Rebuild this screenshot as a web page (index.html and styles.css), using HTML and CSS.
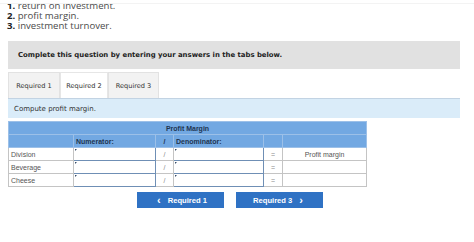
FILE: index.html
```html
<!DOCTYPE html>
<html lang="en">
<head>
  <meta charset="UTF-8" />
  <title>Profit Margin</title>
  <link rel="stylesheet" href="styles.css">
</head>
<body>
  <div class="topbar"></div>
  <ol class="parts">
    <li><b>1.</b> return on investment.</li>
    <li><b>2.</b> profit margin.</li>
    <li><b>3.</b> investment turnover.</li>
  </ol>

  <div class="notice">Complete this question by entering your answers in the tabs below.</div>

  <div class="tabs">
    <div class="tab">Required 1</div>
    <div class="tab active">Required 2</div>
    <div class="tab">Required 3</div>
  </div>
  <div class="prompt">Compute profit margin.</div>

  <table class="grid">
    <colgroup>
      <col class="w-label">
      <col class="w-num">
      <col class="w-op">
      <col class="w-den">
      <col class="w-eq">
      <col class="w-res">
    </colgroup>
    <tr class="head">
      <th colspan="6">Profit Margin</th>
    </tr>
    <tr class="head sub">
      <th></th>
      <th>Numerator:</th>
      <th class="c-op">/</th>
      <th>Denominator:</th>
      <th></th>
      <th></th>
    </tr>
    <tr>
      <td>Division</td>
      <td class="inp"><span class="box"></span></td>
      <td class="c-op">/</td>
      <td class="inp"><span class="box"></span></td>
      <td class="c-op">=</td>
      <td class="c-res">Profit margin</td>
    </tr>
    <tr>
      <td>Beverage</td>
      <td class="inp"><span class="box"></span></td>
      <td class="c-op">/</td>
      <td class="inp"><span class="box"></span></td>
      <td class="c-op">=</td>
      <td class="c-res"></td>
    </tr>
    <tr>
      <td>Cheese</td>
      <td class="inp"><span class="box"></span></td>
      <td class="c-op">/</td>
      <td class="inp"><span class="box"></span></td>
      <td class="c-op">=</td>
      <td class="c-res"></td>
    </tr>
  </table>

  <div class="nav">
    <button class="btn"><span class="chev">&lsaquo;</span> Required 1</button>
    <button class="btn">Required 3 <span class="chev">&rsaquo;</span></button>
  </div>
</body>
</html>
```

FILE: styles.css
```css
* { margin: 0; padding: 0; box-sizing: border-box; }
body {
  font-family: 'Open Sans', 'Liberation Sans', sans-serif;
  background: #fff;
  color: #333;
  padding: 0 8px;
  width: 474px;
  overflow: hidden;
}
/* sticky header of the page, scrolled over the first list line */
.topbar {
  position: absolute;
  left: 0;
  top: 0;
  width: 474px;
  height: 4px;
  background: rgba(255, 255, 255, 0.96);
  border-bottom: 1px solid #f3f3f3;
  z-index: 2;
}
.parts {
  list-style: none;
  font-size: 9.6px;
  line-height: 10px;
  color: #4a4a4a;
  margin: 1px 0 0 -1px;
}
.parts li { height: 10px; }
.parts b { color: #222; }
.notice {
  margin-top: 10px;
  width: 452px;
  height: 28px;
  background: #e1e1e1;
  font-family: 'DejaVu Sans', Verdana, sans-serif;
  font-weight: bold;
  font-size: 6.9px;
  color: #222;
  padding-left: 10px;
  display: flex;
  align-items: center;
}
.tabs {
  display: flex;
  margin-top: 3px;
  height: 26px;
}
.tab {
  font-family: 'DejaVu Sans', Verdana, sans-serif;
  font-size: 6.6px;
  color: #333;
  background: #f2f2f2;
  border: 1px solid #e2e2e2;
  border-bottom: none;
  display: flex;
  align-items: center;
  justify-content: center;
  width: 52px;
}
.tab:nth-child(2) { width: 48px; }
.tab:nth-child(3) { width: 51px; }
.tab.active { background: #fff; border-color: #e6e6e6; }
.prompt {
  width: 452px;
  height: 20px;
  background: #daecf9;
  border-top: 1px solid #c2d3e3;
  font-family: 'DejaVu Sans', Verdana, sans-serif;
  font-size: 7px;
  color: #333;
  padding-left: 6px;
  display: flex;
  align-items: center;
}
.grid {
  margin-top: 3px;
  border-collapse: collapse;
  width: 358px;
  font-family: 'Liberation Sans', Arial, sans-serif;
  font-size: 7px;
  table-layout: fixed;
}
.w-label { width: 65px; }
.w-num { width: 82px; }
.w-op { width: 18px; }
.w-den { width: 90px; }
.w-eq { width: 19px; }
.w-res { width: 84px; }
.grid th, .grid td {
  border: 1px solid #c4c4c4;
  height: 13px;
  padding: 0 2px;
  white-space: nowrap;
  overflow: hidden;
}
.grid .head th {
  background: #72a8e2;
  color: #1f3550;
  font-weight: bold;
  border-color: #9cc0e8;
  height: 13px;
}
.grid .sub th { text-align: left; padding-left: 2px; }
.grid .sub th.c-op { text-align: center; padding: 0; }
.grid td { color: #555; }
.grid .c-op { text-align: center; padding: 0; }
.grid td.c-op { color: #888; }
.grid .c-res { text-align: center; }
.grid td.inp {
  padding: 0;
  border: 1px solid #6f8fb5;
  position: relative;
}
.box {
  display: block;
  width: 100%;
  height: 100%;
  min-height: 12px;
  background: #fff;
}
.box::before {
  content: "";
  position: absolute;
  left: 1px;
  top: 1px;
  border-left: 2px solid #3a4f6a;
  border-bottom: 2px solid transparent;
}
.nav {
  display: flex;
  gap: 12px;
  margin-top: 5px;
  padding-left: 129px;
}
.btn {
  width: 87px;
  height: 16px;
  background: #2f72c4;
  color: #fff;
  border: none;
  font-family: 'Liberation Sans', Arial, sans-serif;
  font-weight: bold;
  font-size: 7.6px;
  display: flex;
  align-items: center;
  justify-content: center;
  gap: 4px;
}
.chev { font-size: 11px; line-height: 1; margin: 0 3px; }
```
